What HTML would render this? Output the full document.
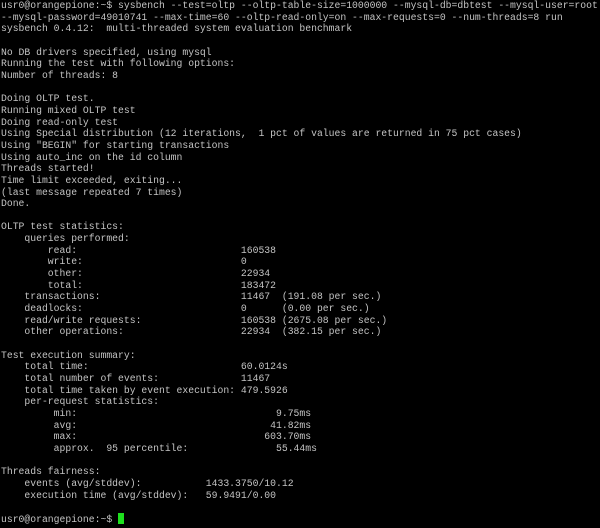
<!DOCTYPE html>
<html><head><style>
html,body{margin:0;padding:0;background:#000;width:600px;height:528px;overflow:hidden}
pre{margin:0;position:absolute;left:1px;top:0;font-family:"Liberation Mono",monospace;font-size:9.75px;line-height:11.66px;color:#c4c4c4;white-space:pre}
.cur{display:inline-block;width:6px;height:11px;background:#1ee01e;vertical-align:-2px}
</style></head><body><pre>usr0@orangepione:~$ sysbench --test=oltp --oltp-table-size=1000000 --mysql-db=dbtest --mysql-user=root
--mysql-password=49010741 --max-time=60 --oltp-read-only=on --max-requests=0 --num-threads=8 run
sysbench 0.4.12:  multi-threaded system evaluation benchmark

No DB drivers specified, using mysql
Running the test with following options:
Number of threads: 8

Doing OLTP test.
Running mixed OLTP test
Doing read-only test
Using Special distribution (12 iterations,  1 pct of values are returned in 75 pct cases)
Using "BEGIN" for starting transactions
Using auto_inc on the id column
Threads started!
Time limit exceeded, exiting...
(last message repeated 7 times)
Done.

OLTP test statistics:
    queries performed:
        read:                            160538
        write:                           0
        other:                           22934
        total:                           183472
    transactions:                        11467  (191.08 per sec.)
    deadlocks:                           0      (0.00 per sec.)
    read/write requests:                 160538 (2675.08 per sec.)
    other operations:                    22934  (382.15 per sec.)

Test execution summary:
    total time:                          60.0124s
    total number of events:              11467
    total time taken by event execution: 479.5926
    per-request statistics:
         min:                                  9.75ms
         avg:                                 41.82ms
         max:                                603.70ms
         approx.  95 percentile:               55.44ms

Threads fairness:
    events (avg/stddev):           1433.3750/10.12
    execution time (avg/stddev):   59.9491/0.00

usr0@orangepione:~$ <span class="cur"></span></pre></body></html>
